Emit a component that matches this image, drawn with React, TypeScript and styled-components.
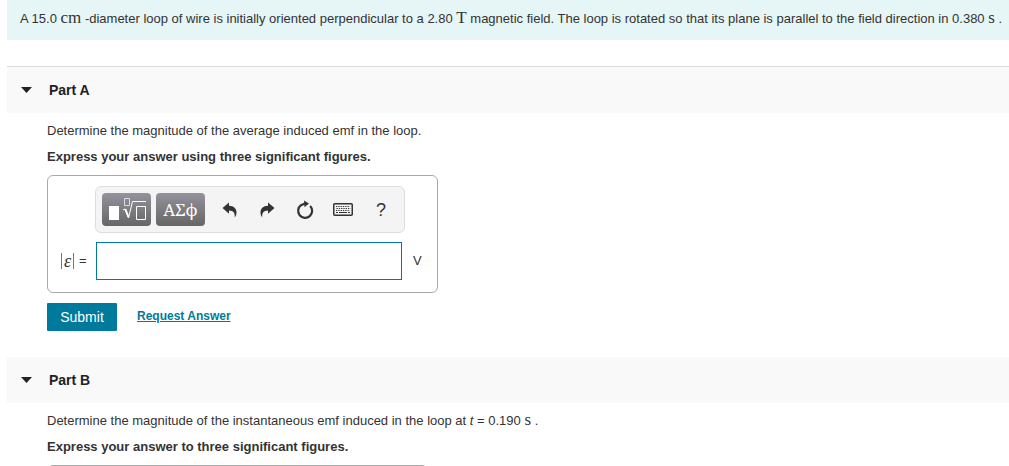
import React from "react";
import styled, { createGlobalStyle } from "styled-components";

const GlobalStyle = createGlobalStyle`
  *, *::before, *::after { box-sizing: border-box; }
  html { scrollbar-width: none; }
  body {
    margin: 0;
    background: #fff;
    color: #333;
    font: 13px/18px "Liberation Sans", Arial, sans-serif;
  }
`;

const Page = styled.main`
  padding-left: 7px;
`;

const Intro = styled.p`
  margin: 0 0 26px;
  padding: 10px 0 12px 13px;
  background: #e6f6f6;
  white-space: nowrap;
`;

const Unit = styled.span`
  font-family: "Liberation Serif", "Times New Roman", serif;
  font-size: 17px;
  line-height: 0;
`;

const PartHeader = styled.header<{ $ruled?: boolean }>`
  background: #f9f9f9;
  border-top: ${(p) => (p.$ruled ? "1px solid #dcdcdc" : "0")};
`;

const PartToggle = styled.button`
  display: flex;
  align-items: center;
  gap: 17px;
  width: 100%;
  height: 46px;
  padding: 0 14px;
  border: 0;
  background: none;
  color: #222;
  font: inherit;
  font-weight: bold;
  text-align: left;
`;

const PartTitle = styled.span`
  font-size: 14px;
`;

const PartBody = styled.div`
  display: flex;
  flex-direction: column;
  align-items: flex-start;
  gap: 8px;
  padding: 9px 0 26px 40px;
`;

const Prompt = styled.p`
  margin: 0;
`;

const Instruction = styled(Prompt)`
  font-weight: bold;
`;

const AnswerBox = styled.div<{ $width: number }>`
  width: 100%;
  max-width: ${(p) => p.$width}px;
  margin-top: 1px;
  padding: 10px 12px 12px 12px;
  border: 1px solid #aaa;
  border-radius: 6px;
`;

const Toolbar = styled.div`
  display: flex;
  align-items: center;
  width: 310px;
  height: 47px;
  margin: 0 0 9px 35px;
  padding: 0 6px;
  border: 1px solid #dedede;
  border-radius: 6px;
  background: #f4f4f4;
`;

const PaletteButton = styled.button`
  display: flex;
  flex-shrink: 0;
  align-items: center;
  justify-content: center;
  width: 49px;
  height: 33px;
  margin-right: 5px;
  padding: 0;
  border: 0;
  border-radius: 4px;
  background: linear-gradient(#94929b, #666);
  color: #fff;
  font: 17px/22px "Noto Serif", "Liberation Serif", serif;
`;

const ToolButton = styled.button`
  display: flex;
  flex-shrink: 0;
  align-items: center;
  justify-content: center;
  width: 38px;
  height: 33px;
  padding: 0;
  border: 0;
  background: none;
  color: #333;
  font: 18px/22px "Liberation Sans", Arial, sans-serif;
`;

const EntryRow = styled.div`
  display: flex;
  align-items: center;
`;

const EntryLabel = styled.label`
  display: flex;
  align-items: center;
  gap: 5px;
  width: 36px;
  padding-left: 1px;
`;

const Magnitude = styled.span`
  padding: 0 2px;
  border: solid #777;
  border-width: 0 1px;
  font: italic 18px/16px "Liberation Serif", serif;
`;

const Entry = styled.input`
  width: 306px;
  height: 38px;
  padding: 0 8px;
  border: 1px solid #007a99;
  border-radius: 0;
  background: #fff;
  font: inherit;
  outline: none;
`;

const EntryUnit = styled.span`
  margin-left: 11px;
`;

const Actions = styled.div`
  display: flex;
  align-items: center;
  gap: 20px;
  padding-top: 2px;
`;

const Submit = styled.button`
  width: 70px;
  height: 28px;
  padding: 0;
  border: 0;
  border-radius: 1px;
  background: #007a9c;
  color: #fff;
  font: 14px/18px "Liberation Sans", Arial, sans-serif;
`;

const RequestLink = styled.a`
  color: #007a99;
  font-size: 12px;
  font-weight: bold;
  line-height: 18px;
  padding-bottom: 2px;
`;

const Caret = () => (
  <svg width="11" height="6" viewBox="0 0 11 6" aria-hidden="true">
    <path d="M0 0h11L5.5 6z" fill="#222" />
  </svg>
);

const TemplateIcon = () => (
  <svg width="39" height="25" viewBox="0 0 39 25" fill="none" stroke="#fff" aria-hidden="true">
    <path d="M2 9h10v14H2z" fill="#fff" stroke="none" />
    <path d="M17.5 1.500h5v7h-5z" stroke="#ddd" />
    <path d="M16 13l2-1 3.500 9L25.500 4.500H39" />
    <path d="M18.300 12l3.200 8" strokeWidth="2" />
    <path d="M29.500 9.500h9v13h-9z" />
  </svg>
);

const UndoIcon = ({ mirrored = false }: { mirrored?: boolean }) => (
  <svg width="15" height="16" viewBox="0 0 15 16" aria-hidden="true">
    <path
      transform={mirrored ? "matrix(-1 0 0 1 15 0)" : undefined}
      d="M.5 6L7 .5v3.300c5 .2 7.500 3 7.500 6.700 0 2-.6 3.500-1.700 5 .3-4.500-1.300-6.800-5.800-6.900v3.200z"
      fill="#333"
    />
  </svg>
);

const ResetIcon = () => (
  <svg width="18" height="20" viewBox="0 0 18 20" aria-hidden="true">
    <path d="M14.200 6A7 7 0 1 1 5 5.200L9 3.600" fill="none" stroke="#333" strokeWidth="2.200" />
    <path d="M8 .5l5 3-4.500 3.800z" fill="#333" />
  </svg>
);

const KeyboardIcon = () => (
  <svg width="20" height="13" viewBox="0 0 20 13" fill="none" stroke="#333" aria-hidden="true">
    <rect x=".75" y=".75" width="18.500" height="11.500" rx="1" strokeWidth="1.500" />
    <path d="M3 3.500h14M3.500 5.500h14M3 7.500h14" strokeDasharray="1.300 1" />
    <path d="M3 9.500h2M6 9.500h8M15 9.500h2" />
  </svg>
);

const EquationToolbar = () => (
  <Toolbar role="toolbar" aria-label="Equation tools">
    <PaletteButton type="button" aria-label="Templates"><TemplateIcon /></PaletteButton>
    <PaletteButton type="button">ΑΣϕ</PaletteButton>
    <ToolButton type="button" aria-label="Undo"><UndoIcon /></ToolButton>
    <ToolButton type="button" aria-label="Redo"><UndoIcon mirrored /></ToolButton>
    <ToolButton type="button" aria-label="Reset"><ResetIcon /></ToolButton>
    <ToolButton type="button" aria-label="Keyboard shortcuts"><KeyboardIcon /></ToolButton>
    <ToolButton type="button">?</ToolButton>
  </Toolbar>
);

const Part = ({ title, ruled, children }: { title: string; ruled?: boolean; children: React.ReactNode }) => (
  <section>
    <PartHeader $ruled={ruled}>
      <PartToggle type="button" aria-expanded="true">
        <Caret />
        <PartTitle>{title}</PartTitle>
      </PartToggle>
    </PartHeader>
    <PartBody>{children}</PartBody>
  </section>
);

export default function App() {
  return (
    <>
      <GlobalStyle />
      <Page>
        <Intro>
          A 15.0 <Unit>cm</Unit> -diameter loop of wire is initially oriented perpendicular to a 2.80{" "}
          <Unit>T</Unit> magnetic field. The loop is rotated so that its plane is parallel to the field
          direction in 0.380 <Unit>s</Unit> .
        </Intro>
        <Part title="Part A" ruled>
          <Prompt>Determine the magnitude of the average induced emf in the loop.</Prompt>
          <Instruction>Express your answer using three significant figures.</Instruction>
          <AnswerBox $width={391}>
            <EquationToolbar />
            <EntryRow>
              <EntryLabel htmlFor="emf">
                <Magnitude>ε</Magnitude>=
              </EntryLabel>
              <Entry id="emf" type="text" autoComplete="off" />
              <EntryUnit>V</EntryUnit>
            </EntryRow>
          </AnswerBox>
          <Actions>
            <Submit type="button">Submit</Submit>
            <RequestLink href="#request">Request Answer</RequestLink>
          </Actions>
        </Part>
        <Part title="Part B">
          <Prompt>
            Determine the magnitude of the instantaneous emf induced in the loop at <i>t</i> = 0.190{" "}
            <Unit>s</Unit> .
          </Prompt>
          <Instruction>Express your answer to three significant figures.</Instruction>
          <AnswerBox $width={381} />
        </Part>
      </Page>
    </>
  );
}
